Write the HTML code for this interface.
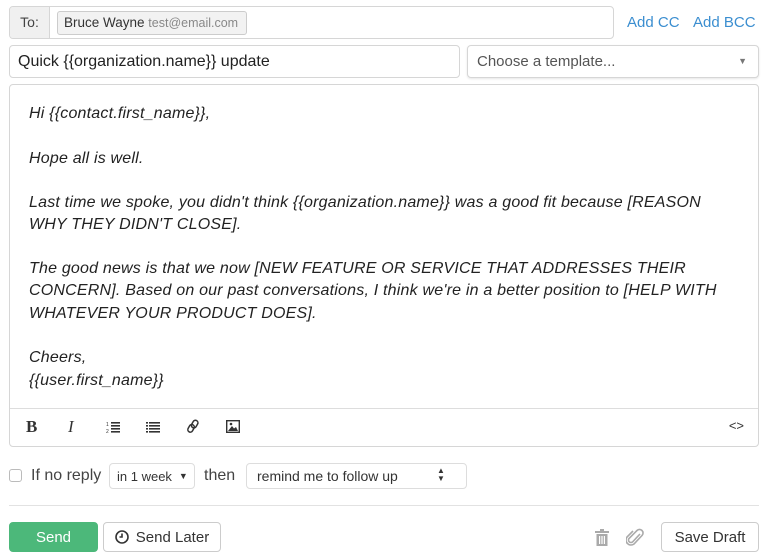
<!DOCTYPE html>
<html><head><style>
*{box-sizing:border-box;margin:0;padding:0}
body{width:768px;height:557px;background:#fff;font-family:"Liberation Sans",sans-serif;color:#333;position:relative;overflow:hidden}
.a{position:absolute}
.box{border:1px solid #d6d6d6;border-radius:4px;background:#fff}
.ed p{font-style:italic;font-size:16px;letter-spacing:0.2px;color:#222;position:absolute;left:28px;white-space:nowrap}
.btn{border:1px solid #ccc;border-radius:4px;background:#fff;font-size:15px;display:flex;align-items:center;justify-content:center}
</style></head><body>
<div class="a box" style="left:9px;top:6px;width:605px;height:33px;overflow:hidden">
 <div class="a" style="left:0;top:0;width:40px;height:31px;background:#f0f0f0;border-right:1px solid #d6d6d6;font-size:14px;line-height:31px;text-align:center;color:#444">To:</div>
 <div class="a" style="left:47px;top:4px;width:190px;height:24px;background:#f2f2f2;border:1px solid #ccc;border-radius:3px;font-size:13.5px;line-height:22px;padding-left:6px;color:#333">Bruce Wayne <span style="color:#888;font-size:12.5px">test@email.com</span></div>
</div>
<div class="a" style="left:627px;top:14px;font-size:15px;color:#3b8ed0">Add CC</div>
<div class="a" style="left:693px;top:14px;font-size:15px;color:#3b8ed0">Add BCC</div>
<div class="a box" style="left:9px;top:45px;width:451px;height:33px;font-size:16px;line-height:31px;padding-left:8px;color:#222">Quick {{organization.name}} update</div>
<div class="a box" style="left:467px;top:45px;width:292px;height:33px;font-size:15px;line-height:31px;padding-left:9px;color:#555;box-shadow:0 1px 2px rgba(0,0,0,.1)">Choose a template...<span class="a" style="right:11px;top:0;font-size:9px;color:#777">▼</span></div>
<div class="a box ed" style="left:9px;top:84px;width:750px;height:363px">
 <div style="position:absolute;left:-9px;top:-84px">
 <p style="top:104px">Hi {{contact.first_name}},</p>
 <p style="top:149px">Hope all is well.</p>
 <p style="top:193px">Last time we spoke, you didn't think {{organization.name}} was a good fit because [REASON</p>
 <p style="top:215px">WHY THEY DIDN'T CLOSE].</p>
 <p style="top:259px">The good news is that we now [NEW FEATURE OR SERVICE THAT ADDRESSES THEIR</p>
 <p style="top:281px">CONCERN]. Based on our past conversations, I think we're in a better position to [HELP WITH</p>
 <p style="top:304px">WHATEVER YOUR PRODUCT DOES].</p>
 <p style="top:348px">Cheers,</p>
 <p style="top:371px">{{user.first_name}}</p>
 </div>
 <div class="a" style="left:0;right:0;top:323px;border-top:1px solid #ddd"></div>
 <div class="a" style="left:16px;top:332px;font-family:'Liberation Serif',serif;font-weight:bold;font-size:17px;color:#333">B</div>
 <div class="a" style="left:58px;top:332px;font-family:'Liberation Serif',serif;font-style:italic;font-size:17px;color:#333">I</div>
 <svg class="a" style="left:96px;top:335px" width="14" height="14" viewBox="0 0 14 14" fill="#333"><rect x="5" y="2" width="9" height="1.6"/><rect x="5" y="5" width="9" height="1.6"/><rect x="5" y="8" width="9" height="1.6"/><rect x="5" y="11" width="9" height="1.6"/><text x="0" y="6" font-size="5" font-family="Liberation Sans">1</text><text x="0" y="13" font-size="5" font-family="Liberation Sans">2</text></svg>
 <svg class="a" style="left:136px;top:335px" width="14" height="14" viewBox="0 0 14 14" fill="#333"><rect x="0" y="2" width="2" height="1.6"/><rect x="0" y="5" width="2" height="1.6"/><rect x="0" y="8" width="2" height="1.6"/><rect x="0" y="11" width="2" height="1.6"/><rect x="3" y="2" width="11" height="1.6"/><rect x="3" y="5" width="11" height="1.6"/><rect x="3" y="8" width="11" height="1.6"/><rect x="3" y="11" width="11" height="1.6"/></svg>
 <svg class="a" style="left:176px;top:334px" width="14" height="15" viewBox="0 0 14 15" fill="none" stroke="#333" stroke-width="1.5"><rect x="5" y="0.5" width="5" height="8" rx="2.5" transform="rotate(30 7 7)"/><rect x="4" y="6" width="5" height="8" rx="2.5" transform="rotate(30 7 7)"/></svg>
 <svg class="a" style="left:216px;top:335px" width="14" height="13" viewBox="0 0 14 13"><rect x="0.7" y="0.7" width="12.6" height="11.6" fill="none" stroke="#333" stroke-width="1.4"/><path d="M2 11 L6 6 L8 8.5 L10 7 L12 11Z" fill="#333"/><circle cx="5" cy="4" r="1.3" fill="#333"/></svg>
 <div class="a" style="right:14px;top:333px;font-size:13px;color:#333">&lt;&gt;</div>
</div>
<div class="a" style="left:9px;top:469px;width:13px;height:13px;border:1px solid #bbb;border-radius:3px"></div>
<div class="a" style="left:31px;top:467px;font-size:16px;color:#444">If no reply</div>
<div class="a btn" style="left:109px;top:463px;width:86px;height:26px;font-size:13px;justify-content:flex-start;padding-left:7px;border-color:#ddd">in 1 week <span style="font-size:9px;margin-left:7px">▼</span></div>
<div class="a" style="left:204px;top:467px;font-size:16px;color:#444">then</div>
<div class="a btn" style="left:246px;top:463px;width:221px;height:26px;font-size:14px;justify-content:flex-start;padding-left:10px;border-color:#ddd">remind me to follow up<span class="a" style="left:190px;top:3px;font-size:8px;line-height:8px;text-align:center">▲<br>▼</span></div>
<div class="a" style="left:9px;right:9px;top:505px;border-top:1px solid #e2e2e2"></div>
<div class="a btn" style="left:9px;top:522px;width:89px;height:30px;background:#4cb87a;border-color:#4cb87a;color:#fff">Send</div>
<div class="a btn" style="left:103px;top:522px;width:118px;height:30px;color:#333"><svg width="14" height="14" viewBox="0 0 14 14" style="margin-right:7px"><circle cx="7" cy="7" r="6" fill="none" stroke="#333" stroke-width="1.6"/><path d="M7 3.5V7H4.5" fill="none" stroke="#333" stroke-width="1.6"/></svg>Send Later</div>
<svg class="a" style="left:595px;top:529px" width="14" height="17" viewBox="0 0 14 17" fill="#aaa"><rect x="0" y="2" width="14" height="2"/><rect x="5" y="0" width="4" height="2"/><path d="M1.5 5H12.5V17H1.5Z"/><rect x="4" y="7" width="1.2" height="8" fill="#fff"/><rect x="6.4" y="7" width="1.2" height="8" fill="#fff"/><rect x="8.8" y="7" width="1.2" height="8" fill="#fff"/></svg>
<svg class="a" style="left:626px;top:528px" width="18" height="19" viewBox="0 0 18 19" fill="none" stroke="#aaa" stroke-width="1.6"><path d="M14 6 L6.5 14 a2.5 2.5 0 0 1 -3.5 -3.5 L11 2.5 a3.5 3.5 0 0 1 5 5 L8 16 a5 5 0 0 1 -7 -7 L7 3"/></svg>
<div class="a btn" style="left:661px;top:522px;width:98px;height:30px;color:#333">Save Draft</div>
</body></html>
